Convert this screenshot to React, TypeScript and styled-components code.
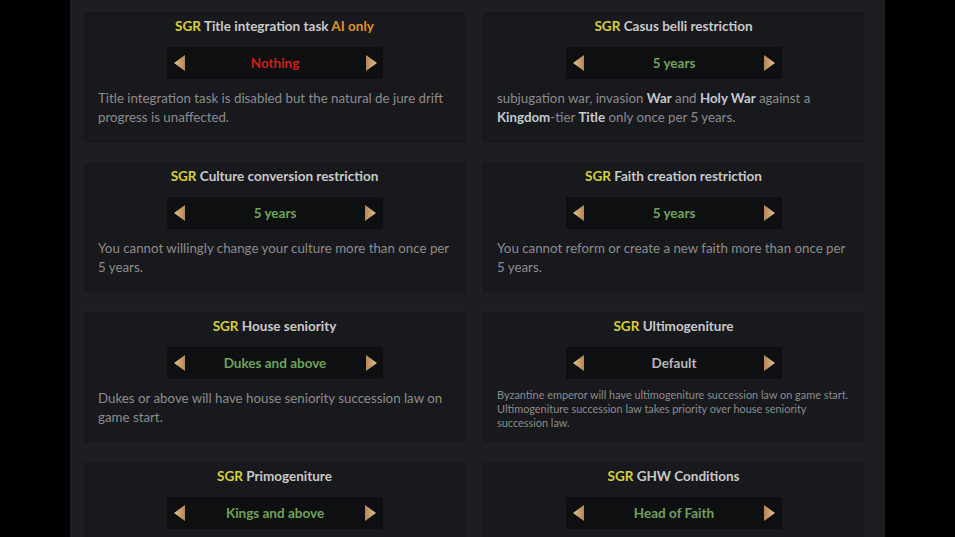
import styled, { createGlobalStyle } from 'styled-components';

const GlobalStyle = createGlobalStyle`
  html, body {
    margin: 0;
    padding: 0;
    background: #000;
    height: 537px;
    overflow: hidden;
  }

  body {
    font-family: Lato, "Open Sans", sans-serif;
  }
`;

const Screen = styled.div`
  width: 955px;
  height: 537px;
  display: flex;
  justify-content: flex-start;
  background: #000;
`;

const Panel = styled.div`
  margin-left: 70px;
  width: 815px;
  height: 537px;
  box-sizing: border-box;
  padding: 11px 19px 0 12px;
  background: #1c1e22;
  display: grid;
  grid-template-columns: 385px 385px;
  column-gap: 14px;
  row-gap: 17px;
  grid-auto-rows: 133px;
  overflow: hidden;
`;

const Card = styled.div`
  background: #18191d;
  border: 1px solid #1e2025;
  box-sizing: border-box;
  display: flex;
  flex-direction: column;
  align-items: center;
  padding: 5px 12px 0;
`;

const Title = styled.div`
  font-size: 13.5px;
  font-weight: 700;
  color: #c9c9c9;
  line-height: 18px;

  .sgr {
    color: #d6cf3b;
  }

  .ai {
    color: #e4912c;
  }
`;

const Selector = styled.div`
  margin-top: 12px;
  width: 216px;
  height: 32px;
  background: #0e0f11;
  display: flex;
  align-items: center;
  justify-content: space-between;
  padding: 0 5px 0 6px;
  box-sizing: border-box;
`;

const Value = styled.span<{ tone: 'green' | 'red' | 'grey' }>`
  font-size: 13.5px;
  font-weight: 700;
  color: ${({ tone }) =>
    tone === 'red' ? '#cf1f1c' : tone === 'grey' ? '#b9b9b9' : '#6ea35a'};
`;

const Description = styled.div<{ small?: boolean }>`
  align-self: stretch;
  padding-left: 3px;
  margin-top: ${({ small }) => (small ? '9px' : '10px')};
  font-size: ${({ small }) => (small ? '10.9px' : '13.3px')};
  line-height: ${({ small }) => (small ? '14px' : '19px')};
  color: #8c8c8c;

  b {
    color: #c3cad4;
  }
`;

const Arrow = ({ dir }: { dir: 'left' | 'right' }) => (
  <svg width="13" height="20" viewBox="0 0 13 20">
    <defs>
      <linearGradient id={`ag-${dir}`} x1="0" y1="0" x2="1" y2="0">
        <stop offset="0" stopColor={dir === 'left' ? '#e6bf8c' : '#b48657'} />
        <stop offset="1" stopColor={dir === 'left' ? '#b48657' : '#e6bf8c'} />
      </linearGradient>
    </defs>
    {dir === 'left' ? (
      <polygon points="12,2 1,10 12,18" fill={`url(#ag-${dir})`} />
    ) : (
      <polygon points="1,2 12,10 1,18" fill={`url(#ag-${dir})`} />
    )}
  </svg>
);

interface ISettingProps {
  title: React.ReactNode;
  value: string;
  tone?: 'green' | 'red' | 'grey';
  small?: boolean;
  children?: React.ReactNode;
}

const Setting = ({ title, value, tone = 'green', small, children }: ISettingProps) => (
  <Card>
    <Title>
      <span className="sgr">SGR</span> {title}
    </Title>
    <Selector>
      <Arrow dir="left" />
      <Value tone={tone}>{value}</Value>
      <Arrow dir="right" />
    </Selector>
    {children && <Description small={small}>{children}</Description>}
  </Card>
);

export default function App() {
  return (
    <Screen>
      <GlobalStyle />
      <Panel>
        <Setting
          title={
            <>
              Title integration task <span className="ai">AI only</span>
            </>
          }
          value="Nothing"
          tone="red"
        >
          Title integration task is disabled but the natural de jure drift progress is unaffected.
        </Setting>
        <Setting title="Casus belli restriction" value="5 years">
          subjugation war, invasion <b>War</b> and <b>Holy War</b> against a <b>Kingdom</b>-tier{' '}
          <b>Title</b> only once per 5 years.
        </Setting>
        <Setting title="Culture conversion restriction" value="5 years">
          You cannot willingly change your culture more than once per 5 years.
        </Setting>
        <Setting title="Faith creation restriction" value="5 years">
          You cannot reform or create a new faith more than once per 5 years.
        </Setting>
        <Setting title="House seniority" value="Dukes and above">
          Dukes or above will have house seniority succession law on game start.
        </Setting>
        <Setting title="Ultimogeniture" value="Default" tone="grey" small>
          Byzantine emperor will have ultimogeniture succession law on game start. Ultimogeniture
          succession law takes priority over house seniority succession law.
        </Setting>
        <Setting title="Primogeniture" value="Kings and above" />
        <Setting title="GHW Conditions" value="Head of Faith" />
      </Panel>
    </Screen>
  );
}
